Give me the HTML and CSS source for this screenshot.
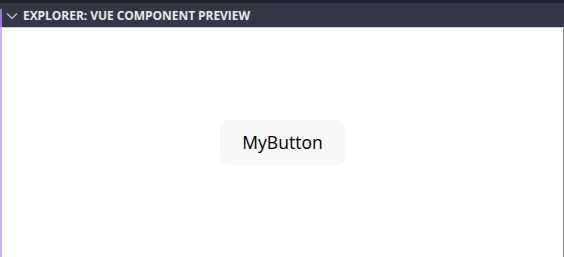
FILE: index.html
```html
<!DOCTYPE html>
<html>
<head>
<meta charset="utf-8">
<link rel="stylesheet" href="styles.css">
</head>
<body>
<div class="topstrip"></div>
<div class="panel">
  <div class="header">
    <svg class="chev" width="12" height="8" viewBox="0 0 12 8"><path d="M1 1.5 L6 6.5 L11 1.5" fill="none" stroke="#c8c9d0" stroke-width="1.2"/></svg>
    <span class="title">EXPLORER: VUE COMPONENT PREVIEW</span>
  </div>
  <div class="content">
    <div class="btn">MyButton</div>
  </div>
  <div class="focusline"></div>
</div>
</body>
</html>
```
FILE: styles.css
```css
html, body {
  margin: 0;
  padding: 0;
  width: 564px;
  height: 257px;
  overflow: hidden;
  background: #ffffff;
}
.topstrip {
  height: 3px;
  background: #21222c;
}
.panel {
  position: relative;
  height: 254px;
  display: flex;
  flex-direction: column;
}
.header {
  background: #343746;
  display: flex;
  align-items: center;
  padding-left: 6px;
  box-sizing: border-box;
  border-bottom: 1px solid #c8c8cc;
  height: 25px;
}
.chev {
  margin-right: 5px;
  margin-top: 1px;
}
.title {
  font-family: "Open Sans", "Noto Sans", sans-serif;
  font-weight: 700;
  font-size: 12px;
  color: #e8e8ec;
  letter-spacing: -0.05px;
}
.content {
  flex: 1;
  display: flex;
  align-items: center;
  justify-content: center;
  border-right: 1px solid #8a8a8a;
  padding-left: 2px;
}
.btn {
  width: 125px;
  height: 45px;
  box-sizing: border-box;
  background: #f8f8f8;
  border-radius: 8px;
  display: flex;
  align-items: center;
  justify-content: center;
  font-family: "Open Sans", "Noto Sans", sans-serif;
  font-size: 17.5px;
  color: #000000;
  padding-bottom: 1px;
}
.focusline {
  position: absolute;
  left: 0;
  top: 6px;
  bottom: 0;
  width: 2px;
  background: #bd93f9;
  opacity: 0.75;
}
```
